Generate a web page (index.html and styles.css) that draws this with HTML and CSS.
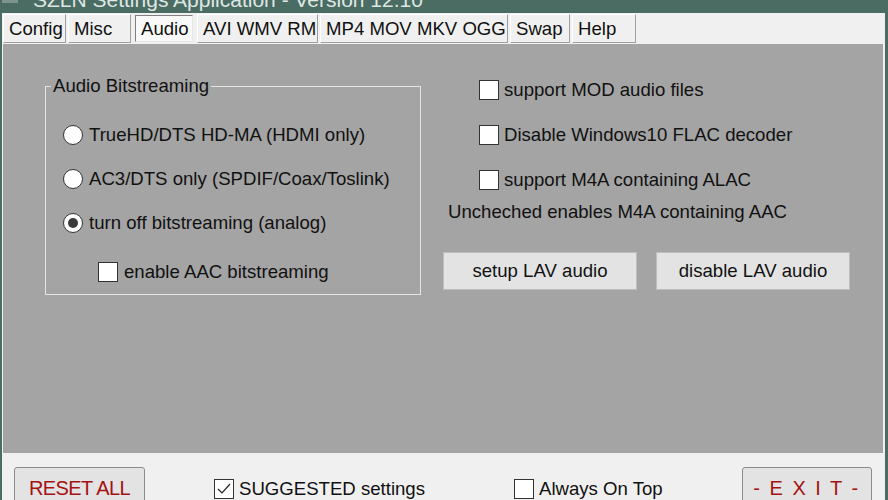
FILE: index.html
```html
<!DOCTYPE html>
<html lang="en">

<head>
    <meta charset="utf-8">
    <meta name="viewport" content="width=device-width, initial-scale=1.0">
    <title>Settings Application</title>
    <link rel="stylesheet" href="styles.css">
</head>

<body>
    <div class="titlebar">
        <span class="appicon"></span>
        <span class="title">SZLN Settings Application - Version 12.10</span>
    </div>

    <div class="client">
        <div class="tabs">
            <button class="tab">Config</button>
            <button class="tab">Misc</button>
            <button class="tab valgt">Audio</button>
            <button class="tab">AVI WMV RM</button>
            <button class="tab">MP4 MOV MKV OGG</button>
            <button class="tab">Swap</button>
            <button class="tab">Help</button>
        </div>

        <div class="panel">
            <fieldset class="group">
                <legend>Audio Bitstreaming</legend>
                <label class="opt"><span class="radio"></span>TrueHD/DTS HD-MA (HDMI only)</label>
                <label class="opt"><span class="radio"></span>AC3/DTS only (SPDIF/Coax/Toslink)</label>
                <label class="opt"><span class="radio on"></span>turn off bitstreaming (analog)</label>
                <label class="opt sub"><span class="box"></span>enable AAC bitstreaming</label>
            </fieldset>

            <div class="side">
                <label class="opt"><span class="box"></span>support MOD audio files</label>
                <label class="opt"><span class="box"></span>Disable Windows10 FLAC decoder</label>
                <label class="opt"><span class="box"></span>support M4A containing ALAC</label>
                <p class="note">Uncheched enables M4A containing AAC</p>
                <div class="actions">
                    <button class="btn">setup LAV audio</button>
                    <button class="btn">disable LAV audio</button>
                </div>
            </div>
        </div>

        <div class="footer">
            <button class="btn red reset">RESET ALL</button>
            <label class="opt suggested">
                <span class="box">
                    <svg width="18" height="18" viewBox="0 0 18 18"><polyline points="3,9 7,13 15,4" fill="none" stroke="#222" stroke-width="1.2"/></svg>
                </span>SUGGESTED settings
            </label>
            <label class="opt ontop"><span class="box"></span>Always On Top</label>
            <button class="btn red exit">- E X I T -</button>
        </div>
    </div>
</body>

</html>
```

FILE: styles.css
```css
body {
    margin: 0;
    background-color: #4a6c62;
    font-family: "Liberation Sans", Arial, sans-serif;
    font-size: 18.6px;
    color: #111;
    overflow: hidden;
    height: 500px;
}

button {
    font: inherit;
    color: inherit;
}

/* TITLE BAR */

.titlebar {
    height: 13px;
    overflow: hidden;
    display: flex;
    align-items: flex-start;
}

.appicon {
    width: 16px;
    height: 3px;
    margin-left: 2px;
    background-color: #7c948c;
}

.title {
    margin-left: 15px;
    margin-top: -12px;
    font-size: 21px;
    line-height: 24px;
    color: #dfe7e4;
    white-space: nowrap;
}

/* CLIENT AREA */

.client {
    background-color: #f0f0f0;
    margin: 0 3px 0 2px;
    height: 487px;
    overflow: hidden;
}

.tabs {
    display: flex;
    gap: 2px;
    padding: 1px 0 0 1px;
    height: 29px;
}

.tab {
    height: 29px;
    padding: 0 0 0 5px;
    text-align: left;
    background-color: #f0f0f0;
    border: 1px solid;
    border-color: #fff #a0a0a0 #a0a0a0 #fff;
    line-height: 26px;
}

.tab:nth-child(1),
.tab:nth-child(2) {
    width: 63px;
}

.tab:nth-child(4) {
    width: 121px;
}

.tab:nth-child(5) {
    width: 188px;
}

.tab:nth-child(6) {
    width: 60px;
}

.tab:nth-child(7) {
    width: 64px;
}

.tab.valgt {
    width: 58px;
    height: 27px;
    margin: 1px 2px 0 2px;
    background-color: #f9f9f9;
    border-color: #808080 #e8e8e8 #e8e8e8 #808080;
    line-height: 25px;
}

.panel {
    display: flex;
    align-items: flex-start;
    background-color: #a4a4a4;
    margin: 1px 2px 0 1px;
    height: 409px;
    padding: 31px 0 0 42px;
    box-sizing: border-box;
}

/* CONTROLS */

.opt {
    display: flex;
    align-items: center;
    height: 22px;
    white-space: nowrap;
}

.radio {
    width: 20px;
    height: 20px;
    box-sizing: border-box;
    border: 1px solid #333;
    border-radius: 50%;
    background-color: #fff;
    margin-right: 6px;
    display: flex;
    align-items: center;
    justify-content: center;
}

.radio.on::after {
    content: "";
    width: 10px;
    height: 10px;
    border-radius: 50%;
    background-color: #3a3a3a;
}

.box {
    width: 20px;
    height: 20px;
    box-sizing: border-box;
    border: 1px solid #333;
    background-color: #fff;
    margin-right: 5px;
    display: flex;
    align-items: center;
    justify-content: center;
}

/* GROUP BOX */

.group {
    width: 376px;
    height: 220px;
    box-sizing: border-box;
    margin: 0;
    padding: 27px 0 0 0;
    border: 1px solid #e4e4e4;
}

.group legend {
    padding: 0 2px;
    margin-left: 5px;
    line-height: 22px;
}

.group .opt {
    margin-left: 17px;
}

.group .opt + .opt {
    margin-top: 22px;
}

.group .sub {
    margin-top: 27px !important;
    margin-left: 52px;
}

.group .sub .box {
    margin-right: 6px;
}

/* RIGHT COLUMN */

.side {
    margin-left: 22px;
    padding-top: 4px;
}

.side .opt {
    margin-left: 36px;
}

.side .opt + .opt {
    margin-top: 23px;
}

.note {
    margin: 10px 0 0 5px;
    line-height: 22px;
}

.actions {
    display: flex;
    gap: 19px;
    margin-top: 29px;
}

.btn {
    background-color: #e3e3e3;
    border: 1px solid #bdbdbd;
    padding: 0;
    cursor: pointer;
}

.actions .btn {
    width: 194px;
    height: 38px;
}

/* FOOTER */

.footer {
    display: flex;
    align-items: center;
    padding: 14px 0 0 12px;
}

.red {
    color: #a51212;
    border-color: #8c8c8c;
    border-radius: 3px;
    font-size: 20px;
    height: 43px;
    flex-shrink: 0;
}

.reset {
    width: 131px;
    letter-spacing: -0.6px;
}

.suggested {
    margin-left: 69px;
}

.ontop {
    margin-left: 89px;
}

.exit {
    width: 130px;
    margin-left: 79px;
    letter-spacing: 2px;
}
```
